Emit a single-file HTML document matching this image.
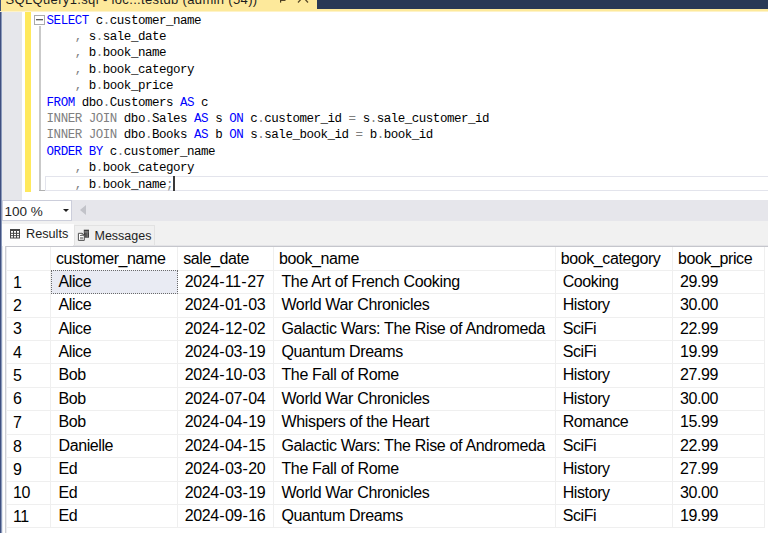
<!DOCTYPE html>
<html><head><meta charset="utf-8"><style>
*{margin:0;padding:0;box-sizing:border-box}
html,body{width:768px;height:533px;overflow:hidden;background:#F1F1F1;position:relative}
div{position:absolute}
.cl{left:46.6px;font-family:"Liberation Mono",monospace;font-size:12.5px;line-height:16.4px;letter-spacing:-0.48px;color:#000;white-space:pre;transform:scaleY(1)}
.k{color:#0000FF}.g{color:#808080}
.ui{font-family:"Liberation Sans",sans-serif;color:#1E1E1E;white-space:pre;line-height:16px}
.gt{font-family:"Liberation Sans",sans-serif;font-size:16px;letter-spacing:-0.4px;line-height:20px;color:#000;white-space:pre}
.vl{top:247px;width:1px;height:281px;background:#EFEFEF}
.hl{left:6px;width:759px;height:1px;background:#EFEFEF}
.hy{margin:0 0.9px 0 0.5px}
.sel{background:#E9EBF3;border:1px dotted #6A6A6A}
</style></head><body>
<div style="left:0;top:0;width:768px;height:9px;background:#293955"></div>
<div style="left:0;top:9px;width:768px;height:3px;background:#FDE99B"></div>
<div style="left:1px;top:0;width:316px;height:12px;background:#FDE99B"></div>
<div style="left:0;top:0;width:1px;height:12px;background:#3F5079"></div>
<div style="left:0;top:11px;width:768px;height:1px;background:#FEF3C8"></div>
<svg style="position:absolute;left:270px;top:-8px" width="45" height="12" viewBox="0 0 45 12"><rect x="10" y="7" width="5.5" height="2" fill="#55472A"/><rect x="10" y="7" width="1.2" height="3.6" fill="#4A3E1E"/><path d="M28 10.5 L38 -0.5 M38 10.5 L28 -0.5" stroke="#5A4B2A" stroke-width="1.3"/></svg>
<div class="ui" style="left:5.5px;top:-8px;font-size:13px;letter-spacing:0.35px">SQLQuery1.sql - loc...testdb (admin (54))</div>
<div style="left:0;top:12px;width:768px;height:188px;background:#FFFFFF"></div>
<div style="left:0;top:12px;width:1px;height:521px;background:#405080"></div>
<div style="left:1px;top:12px;width:1px;height:521px;background:#8A9ABB"></div>
<div style="left:2px;top:12px;width:20px;height:188px;background:#E6E7EB"></div>
<div style="left:25px;top:12px;width:6px;height:180px;background:#FFE95C"></div>
<div style="left:34px;top:15px;width:11px;height:10px;border:1px solid #ABABAB;background:#fff"></div>
<div style="left:36px;top:19px;width:7px;height:1px;background:#5A5A5A"></div><div style="left:36px;top:20px;width:7px;height:1px;background:#C8C8C8"></div>
<div style="left:39px;top:26px;width:1px;height:165px;background:#C9C9C9"></div><div style="left:40px;top:26px;width:1px;height:165px;background:#C9C9C9"></div>
<div style="left:39px;top:190px;width:6px;height:1px;background:#B0B0B0"></div>
<div style="left:45px;top:176px;width:723px;height:15px;border:1px solid #E3E4EC;border-right:none"></div>
<div style="left:173px;top:176px;width:2px;height:15px;background:#3A3A3A"></div>
<div class="cl" style="top:12.97px;transform-origin:0 11.53px"><span class="k">SELECT</span> c<span class="g">.</span>customer_name</div>
<div class="cl" style="top:28.97px;transform-origin:0 11.53px">    <span class="g">,</span> s<span class="g">.</span>sale_date</div>
<div class="cl" style="top:44.97px;transform-origin:0 11.53px">    <span class="g">,</span> b<span class="g">.</span>book_name</div>
<div class="cl" style="top:61.97px;transform-origin:0 11.53px">    <span class="g">,</span> b<span class="g">.</span>book_category</div>
<div class="cl" style="top:77.97px;transform-origin:0 11.53px">    <span class="g">,</span> b<span class="g">.</span>book_price</div>
<div class="cl" style="top:94.97px;transform-origin:0 11.53px"><span class="k">FROM</span> dbo<span class="g">.</span>Customers <span class="k">AS</span> c</div>
<div class="cl" style="top:110.97px;transform-origin:0 11.53px"><span class="g">INNER JOIN</span> dbo<span class="g">.</span>Sales <span class="k">AS</span> s <span class="k">ON</span> c<span class="g">.</span>customer_id <span class="g">=</span> s<span class="g">.</span>sale_customer_id</div>
<div class="cl" style="top:126.97px;transform-origin:0 11.53px"><span class="g">INNER JOIN</span> dbo<span class="g">.</span>Books <span class="k">AS</span> b <span class="k">ON</span> s<span class="g">.</span>sale_book_id <span class="g">=</span> b<span class="g">.</span>book_id</div>
<div class="cl" style="top:143.97px;transform-origin:0 11.53px"><span class="k">ORDER BY</span> c<span class="g">.</span>customer_name</div>
<div class="cl" style="top:159.97px;transform-origin:0 11.53px">    <span class="g">,</span> b<span class="g">.</span>book_category</div>
<div class="cl" style="top:176.97px;transform-origin:0 11.53px">    <span class="g">,</span> b<span class="g">.</span>book_name<span class="g">;</span></div>

<div style="left:2px;top:200px;width:766px;height:21px;background:#E6E6EB"></div>
<div style="left:2px;top:200px;width:70px;height:21px;background:#fff;border:1px solid #CCCEDB"></div>
<div class="ui" style="left:4.5px;top:204px;font-size:13.5px">100 %</div>
<div style="left:63px;top:209px;width:0;height:0;border-left:3.2px solid transparent;border-right:3.2px solid transparent;border-top:3.6px solid #1E1E1E"></div>
<div style="left:79.7px;top:205px;width:0;height:0;border-top:5.3px solid transparent;border-bottom:5.3px solid transparent;border-right:6.5px solid #C2C3C9"></div>
<div style="left:2px;top:224px;width:71.5px;height:23px;background:#FDFDFD"></div>
<div style="left:73.5px;top:224.5px;width:81px;height:21px;background:#F0F0F0;border:1px solid #E2E2E2;border-bottom:none"></div><div style="left:73px;top:245px;width:695px;height:1px;background:#E4E4E7"></div>
<div class="ui" style="left:26px;top:226px;font-size:12.7px">Results</div>
<div class="ui" style="left:94.5px;top:228px;font-size:12.5px">Messages</div>
<svg style="position:absolute;left:10px;top:229px" width="10" height="10" viewBox="0 0 10 10"><rect x="0" y="0" width="10" height="9.5" fill="#444"/><g fill="#fff"><rect x="1" y="2" width="2" height="1.8"/><rect x="4" y="2" width="2" height="1.8"/><rect x="7" y="2" width="2" height="1.8"/><rect x="1" y="4.8" width="2" height="1.4"/><rect x="4" y="4.8" width="2" height="1.4"/><rect x="7" y="4.8" width="2" height="1.4"/><rect x="1" y="7.1" width="2" height="1.4"/><rect x="4" y="7.1" width="2" height="1.4"/><rect x="7" y="7.1" width="2" height="1.4"/></g></svg>
<svg style="position:absolute;left:77px;top:229px" width="13" height="13" viewBox="0 0 13 13"><rect x="6.8" y="0.7" width="5.2" height="8" fill="#3C3C3C"/><rect x="7.4" y="2.5" width="4" height="0.9" fill="#B5B5B5"/><rect x="8.7" y="3.4" width="0.7" height="5" fill="#888"/><rect x="10.2" y="3.4" width="0.7" height="5" fill="#888"/><path d="M1.4 4.3 H5.2 L7.3 6.4 V11.4 H1.4 Z" fill="#fff" stroke="#505050" stroke-width="1"/><path d="M5.2 4.3 V6.4 H7.3" fill="none" stroke="#505050" stroke-width="0.8"/><rect x="3" y="6.1" width="2.2" height="0.9" fill="#666"/><rect x="3" y="8" width="3.2" height="2.4" fill="#A0A0A0"/></svg>
<div style="left:2px;top:246px;width:3px;height:287px;background:#fff"></div><div style="left:2px;top:246px;width:1px;height:287px;background:#E6E8EC"></div>
<div style="left:5px;top:246px;width:763px;height:287px;background:#fff;border-top:1px solid #C5C6CC"></div>
<div style="left:5px;top:246px;width:1px;height:287px;background:#CDCED3"></div>
<div style="left:6px;top:247px;width:1px;height:286px;background:#ECECEF"></div>
<div class="vl" style="left:50px"></div>
<div class="vl" style="left:177px"></div>
<div class="vl" style="left:273px"></div>
<div class="vl" style="left:555px"></div>
<div class="vl" style="left:672px"></div>
<div class="vl" style="left:764px"></div>
<div class="hl" style="top:270px"></div>
<div class="hl" style="top:293px"></div>
<div class="hl" style="top:317px"></div>
<div class="hl" style="top:340px"></div>
<div class="hl" style="top:363px"></div>
<div class="hl" style="top:387px"></div>
<div class="hl" style="top:410px"></div>
<div class="hl" style="top:434px"></div>
<div class="hl" style="top:457px"></div>
<div class="hl" style="top:481px"></div>
<div class="hl" style="top:504px"></div>
<div class="hl" style="top:527px"></div>
<div class="gt" style="left:56.0px;top:248.85px">customer_name</div>
<div class="gt" style="left:183.2px;top:248.85px">sale_date</div>
<div class="gt" style="left:278.9px;top:248.85px">book_name</div>
<div class="gt" style="left:560.7px;top:248.85px">book_category</div>
<div class="gt" style="left:677.9px;top:248.85px">book_price</div>
<div class="sel" style="left:51px;top:270px;width:127px;height:24px"></div>
<div class="gt" style="left:13px;top:272.95px">1</div>
<div class="gt" style="left:58.5px;top:271.95px">Alice</div>
<div class="gt" style="left:184.7px;top:271.95px">2024<span class="hy">-</span>11<span class="hy">-</span>27</div>
<div class="gt" style="left:281.4px;top:271.95px;letter-spacing:-0.33px">The Art of French Cooking</div>
<div class="gt" style="left:562.7px;top:271.95px">Cooking</div>
<div class="gt" style="left:679.9px;top:271.95px">29.99</div>
<div class="gt" style="left:13px;top:295.95px">2</div>
<div class="gt" style="left:58.5px;top:294.95px">Alice</div>
<div class="gt" style="left:184.7px;top:294.95px">2024<span class="hy">-</span>01<span class="hy">-</span>03</div>
<div class="gt" style="left:281.4px;top:294.95px;letter-spacing:-0.33px">World War Chronicles</div>
<div class="gt" style="left:562.7px;top:294.95px">History</div>
<div class="gt" style="left:679.9px;top:294.95px">30.00</div>
<div class="gt" style="left:13px;top:318.95px">3</div>
<div class="gt" style="left:58.5px;top:318.95px">Alice</div>
<div class="gt" style="left:184.7px;top:318.95px">2024<span class="hy">-</span>12<span class="hy">-</span>02</div>
<div class="gt" style="left:281.4px;top:318.95px;letter-spacing:-0.33px">Galactic Wars: The Rise of Andromeda</div>
<div class="gt" style="left:562.7px;top:318.95px">SciFi</div>
<div class="gt" style="left:679.9px;top:318.95px">22.99</div>
<div class="gt" style="left:13px;top:342.95px">4</div>
<div class="gt" style="left:58.5px;top:341.95px">Alice</div>
<div class="gt" style="left:184.7px;top:341.95px">2024<span class="hy">-</span>03<span class="hy">-</span>19</div>
<div class="gt" style="left:281.4px;top:341.95px;letter-spacing:-0.33px">Quantum Dreams</div>
<div class="gt" style="left:562.7px;top:341.95px">SciFi</div>
<div class="gt" style="left:679.9px;top:341.95px">19.99</div>
<div class="gt" style="left:13px;top:365.95px">5</div>
<div class="gt" style="left:58.5px;top:364.95px">Bob</div>
<div class="gt" style="left:184.7px;top:364.95px">2024<span class="hy">-</span>10<span class="hy">-</span>03</div>
<div class="gt" style="left:281.4px;top:364.95px;letter-spacing:-0.33px">The Fall of Rome</div>
<div class="gt" style="left:562.7px;top:364.95px">History</div>
<div class="gt" style="left:679.9px;top:364.95px">27.99</div>
<div class="gt" style="left:13px;top:388.95px">6</div>
<div class="gt" style="left:58.5px;top:388.95px">Bob</div>
<div class="gt" style="left:184.7px;top:388.95px">2024<span class="hy">-</span>07<span class="hy">-</span>04</div>
<div class="gt" style="left:281.4px;top:388.95px;letter-spacing:-0.33px">World War Chronicles</div>
<div class="gt" style="left:562.7px;top:388.95px">History</div>
<div class="gt" style="left:679.9px;top:388.95px">30.00</div>
<div class="gt" style="left:13px;top:412.95px">7</div>
<div class="gt" style="left:58.5px;top:411.95px">Bob</div>
<div class="gt" style="left:184.7px;top:411.95px">2024<span class="hy">-</span>04<span class="hy">-</span>19</div>
<div class="gt" style="left:281.4px;top:411.95px;letter-spacing:-0.33px">Whispers of the Heart</div>
<div class="gt" style="left:562.7px;top:411.95px">Romance</div>
<div class="gt" style="left:679.9px;top:411.95px">15.99</div>
<div class="gt" style="left:13px;top:436.95px">8</div>
<div class="gt" style="left:58.5px;top:435.95px">Danielle</div>
<div class="gt" style="left:184.7px;top:435.95px">2024<span class="hy">-</span>04<span class="hy">-</span>15</div>
<div class="gt" style="left:281.4px;top:435.95px;letter-spacing:-0.33px">Galactic Wars: The Rise of Andromeda</div>
<div class="gt" style="left:562.7px;top:435.95px">SciFi</div>
<div class="gt" style="left:679.9px;top:435.95px">22.99</div>
<div class="gt" style="left:13px;top:459.95px">9</div>
<div class="gt" style="left:58.5px;top:458.95px">Ed</div>
<div class="gt" style="left:184.7px;top:458.95px">2024<span class="hy">-</span>03<span class="hy">-</span>20</div>
<div class="gt" style="left:281.4px;top:458.95px;letter-spacing:-0.33px">The Fall of Rome</div>
<div class="gt" style="left:562.7px;top:458.95px">History</div>
<div class="gt" style="left:679.9px;top:458.95px">27.99</div>
<div class="gt" style="left:13px;top:482.95px">10</div>
<div class="gt" style="left:58.5px;top:482.95px">Ed</div>
<div class="gt" style="left:184.7px;top:482.95px">2024<span class="hy">-</span>03<span class="hy">-</span>19</div>
<div class="gt" style="left:281.4px;top:482.95px;letter-spacing:-0.33px">World War Chronicles</div>
<div class="gt" style="left:562.7px;top:482.95px">History</div>
<div class="gt" style="left:679.9px;top:482.95px">30.00</div>
<div class="gt" style="left:13px;top:506.95px">11</div>
<div class="gt" style="left:58.5px;top:505.95px">Ed</div>
<div class="gt" style="left:184.7px;top:505.95px">2024<span class="hy">-</span>09<span class="hy">-</span>16</div>
<div class="gt" style="left:281.4px;top:505.95px;letter-spacing:-0.33px">Quantum Dreams</div>
<div class="gt" style="left:562.7px;top:505.95px">SciFi</div>
<div class="gt" style="left:679.9px;top:505.95px">19.99</div>

</body></html>
